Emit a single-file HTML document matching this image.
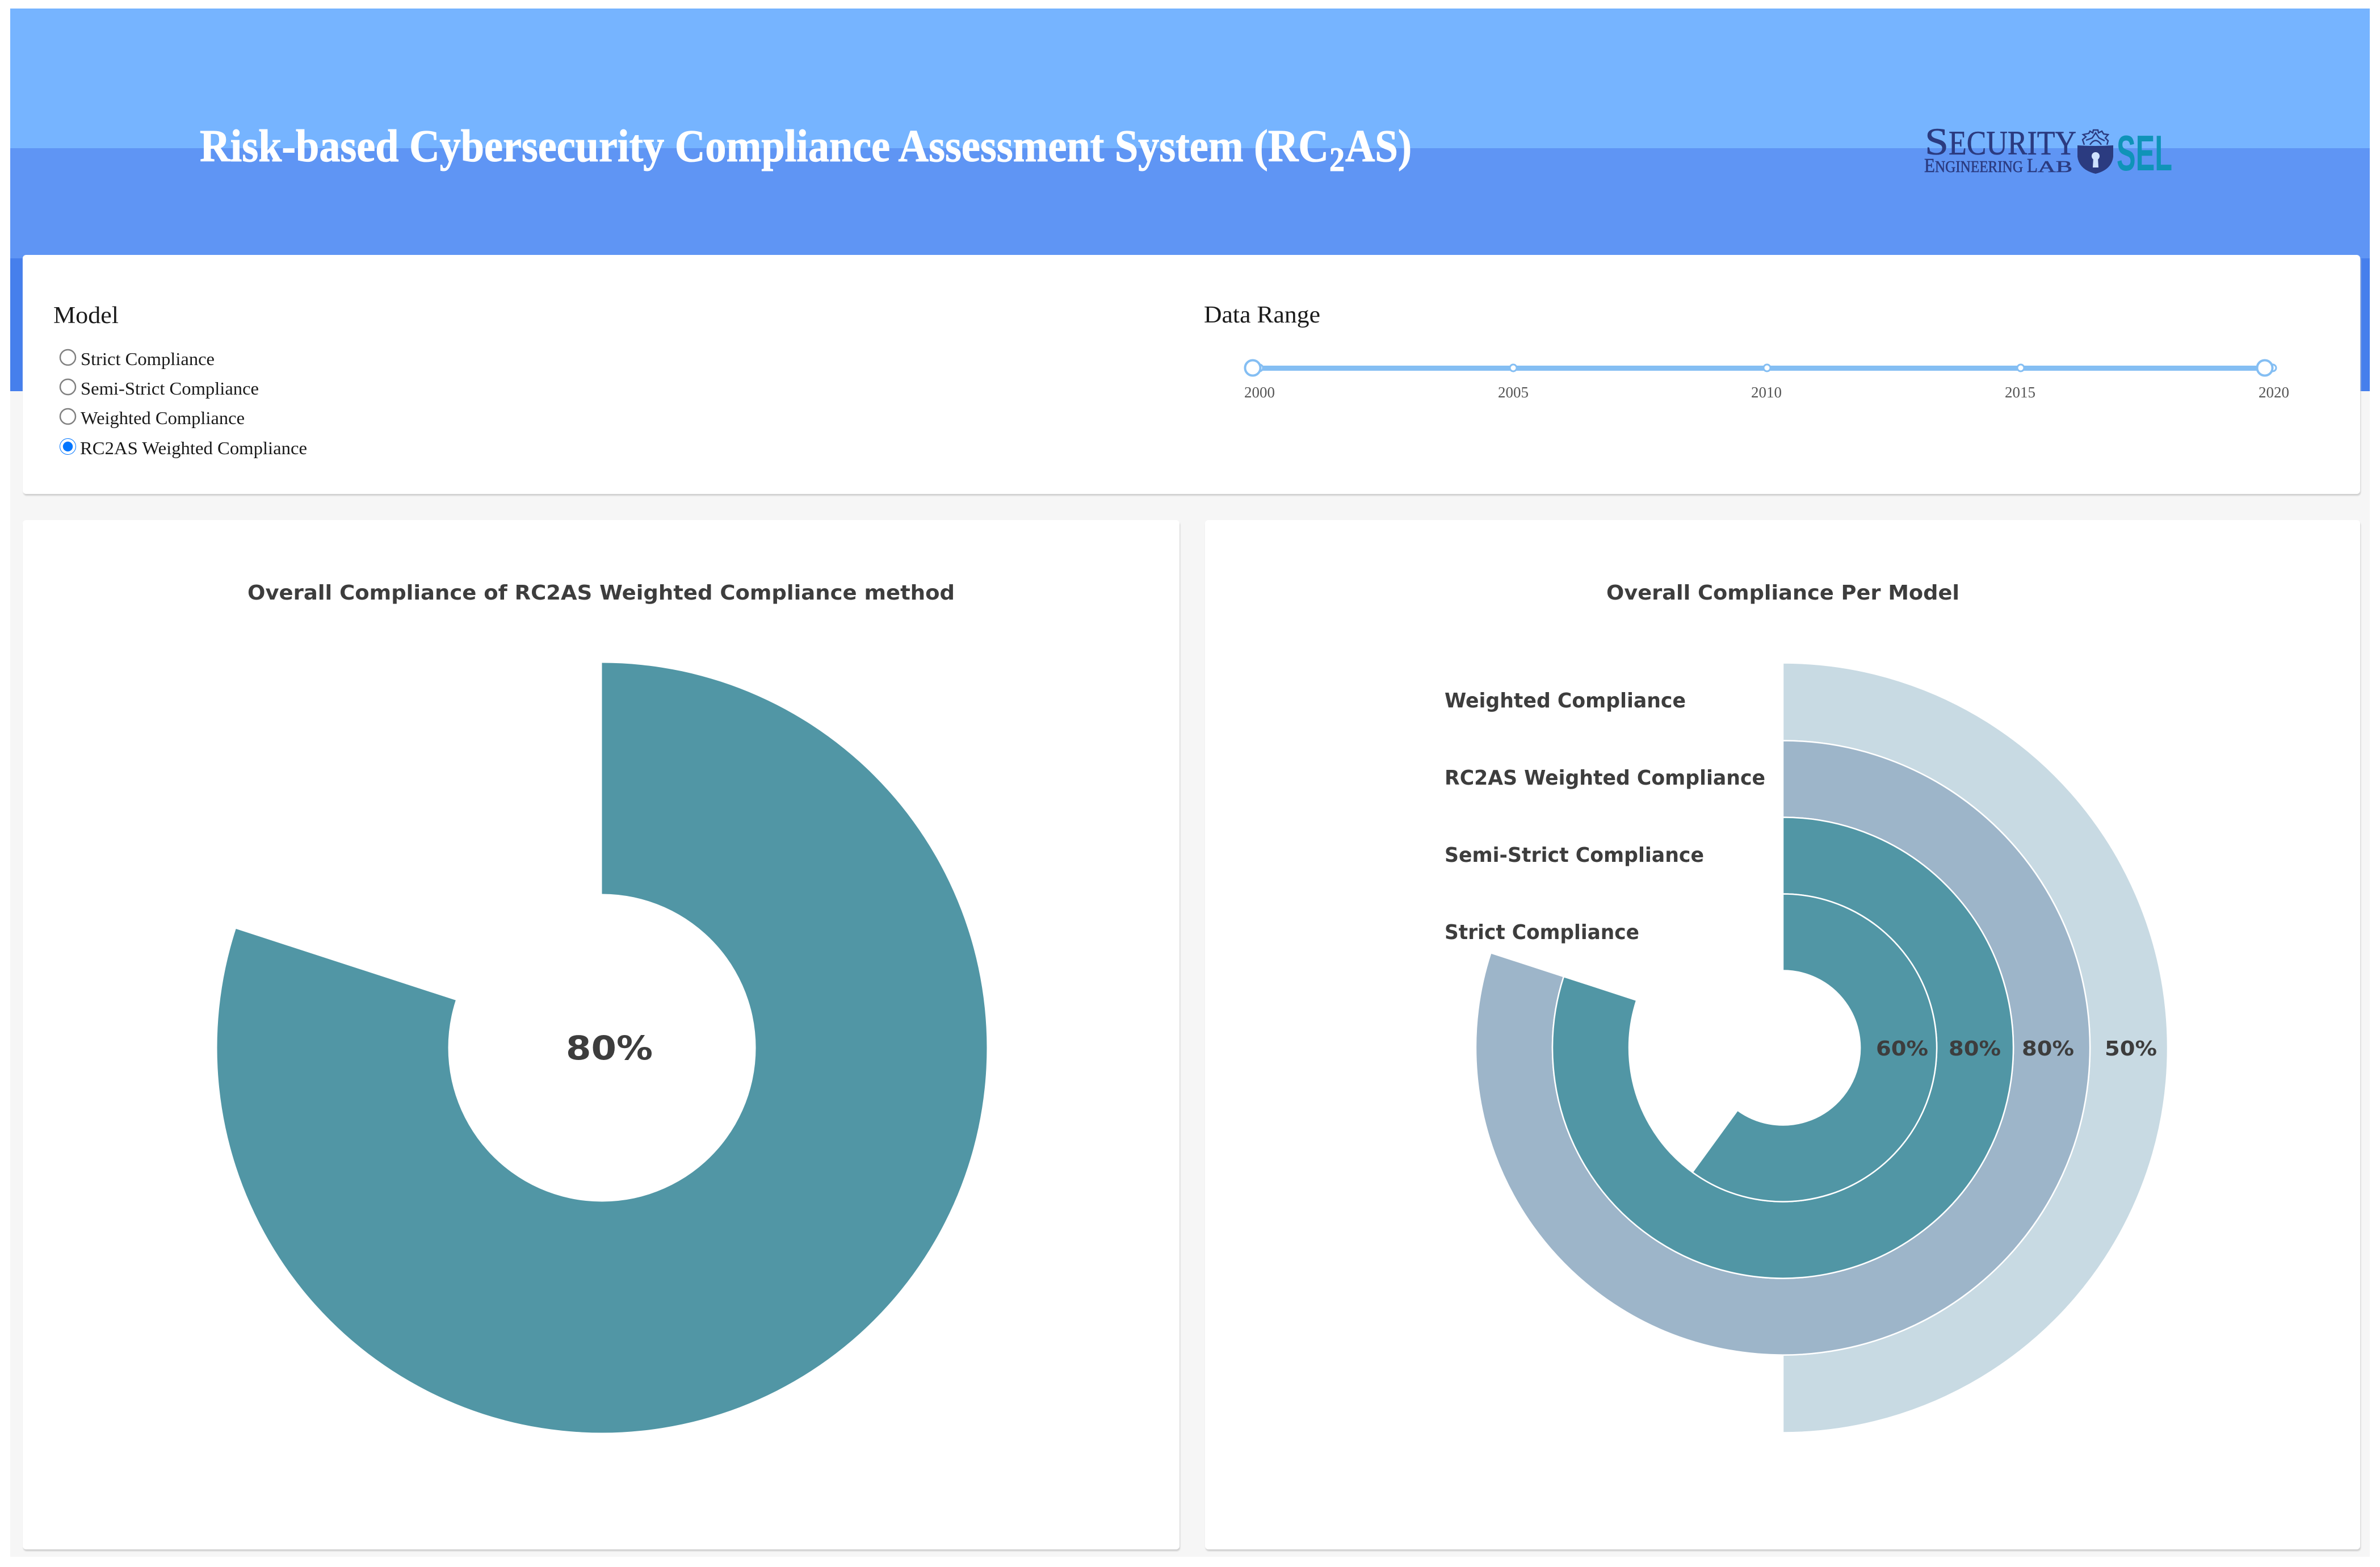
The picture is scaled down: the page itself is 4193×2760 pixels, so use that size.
<!DOCTYPE html>
<html lang="en">
<head>
<meta charset="utf-8">
<title>Risk-based Cybersecurity Compliance Assessment System (RC2AS)</title>
<style>
html,body{margin:0;padding:0;background:#fff;width:4193px;height:2760px;overflow:hidden}
.abs{position:absolute}
.card{position:absolute;background:#fff;border-radius:6px;box-shadow:1px 3px 2px #cfcfcf}
svg{position:absolute;left:0;top:0}
input{position:absolute;margin:0;width:29px;height:29px;left:105px}
.serif{font-family:"Liberation Serif",serif}
.sans{font-family:"DejaVu Sans",sans-serif;font-weight:bold;fill:#3d3d3d}
</style>
</head>
<body>
<div class="abs" style="left:18px;top:15px;width:4157px;height:2727px;background:#f6f6f6"></div>
<div class="abs" style="left:18px;top:455px;width:4157px;height:234px;background:#467fec"></div>
<div class="abs" style="left:18px;top:261px;width:4157px;height:194px;background:#5f95f4"></div>
<div class="abs" style="left:18px;top:15px;width:4157px;height:246px;background:#76b4ff"></div>

<div class="card" style="left:40px;top:449px;width:4118px;height:421px"></div>
<div class="card" style="left:40px;top:916px;width:2038px;height:1813px"></div>
<div class="card" style="left:2123px;top:916px;width:2035px;height:1813px"></div>

<input type="radio" name="m" style="top:615px">
<input type="radio" name="m" style="top:667px">
<input type="radio" name="m" style="top:719px">
<input type="radio" name="m" style="top:772px" checked>

<svg width="4193" height="2760" viewBox="0 0 4193 2760" xmlns="http://www.w3.org/2000/svg">
  <!-- Radio outlines -->
  <g fill="none" stroke="#808080" stroke-width="2.5">
    <circle cx="119.5" cy="629.5" r="13.5"/>
    <circle cx="119.5" cy="681.5" r="13.5"/>
    <circle cx="119.5" cy="733.5" r="13.5"/>
  </g>

  <!-- Header title -->
  <g class="serif" fill="#fff" font-weight="bold" stroke="#fff" stroke-width="1">
    <text x="352" y="284" font-size="80" textLength="1989" lengthAdjust="spacingAndGlyphs">Risk-based Cybersecurity Compliance Assessment System (RC</text>
    <text x="2342" y="301" font-size="60" textLength="27" lengthAdjust="spacingAndGlyphs">2</text>
    <text x="2370" y="284" font-size="80" textLength="117" lengthAdjust="spacingAndGlyphs">AS)</text>
  </g>

  <!-- Logo -->
  <g class="serif" fill="#2b3b80" stroke="#2b3b80" stroke-width="0.6">
    <text x="3391" y="272" font-size="68" textLength="42" lengthAdjust="spacingAndGlyphs">S</text>
    <text x="3433" y="272" font-size="60" textLength="225" lengthAdjust="spacingAndGlyphs">ECURITY</text>
    <text x="3390" y="303" font-size="35" textLength="19" lengthAdjust="spacingAndGlyphs">E</text>
    <text x="3409" y="303" font-size="28" textLength="155" lengthAdjust="spacingAndGlyphs">NGINEERING</text>
    <text x="3571" y="303" font-size="35" textLength="19" lengthAdjust="spacingAndGlyphs">L</text>
    <text x="3590" y="303" font-size="28" textLength="61" lengthAdjust="spacingAndGlyphs">AB</text>
  </g>
  <path d="M3672,255 L3669,246 L3675,241 L3670,237 L3680,235 L3682,231 L3687,234 L3688,229 L3696,229 L3697,234 L3703,231 L3706,236 L3714,237 L3709,243 L3714,248 L3712,255 M3675,247 L3686,243 L3692,234 L3698,243 L3708,248 M3682,255 Q3692,240 3702,255" fill="none" stroke="#2b3b80" stroke-width="2.4"/>
  <path d="M3660,256 Q3692,258 3723,256 L3723,276 Q3720,299 3692,306 Q3663,299 3660,276 Z" fill="#2b3b80"/>
  <circle cx="3692" cy="275" r="7" fill="#cfe2ff"/>
  <path d="M3688,278 L3696,278 L3697,295 L3687,295 Z" fill="#cfe2ff"/>
  <text x="3729" y="300" font-family="Liberation Sans,sans-serif" font-weight="bold" font-size="88" fill="#0f93b8" textLength="98" lengthAdjust="spacingAndGlyphs">SEL</text>

  <!-- Model -->
  <g class="serif" fill="#1a1a1a">
    <text x="94" y="569" font-size="42" textLength="115" lengthAdjust="spacingAndGlyphs">Model</text>
    <text x="2121" y="568" font-size="42" textLength="205" lengthAdjust="spacingAndGlyphs">Data Range</text>
    <text x="142" y="643" font-size="32" textLength="236" lengthAdjust="spacingAndGlyphs">Strict Compliance</text>
    <text x="142" y="695" font-size="32" textLength="314" lengthAdjust="spacingAndGlyphs">Semi-Strict Compliance</text>
    <text x="142" y="747" font-size="32" textLength="289" lengthAdjust="spacingAndGlyphs">Weighted Compliance</text>
    <text x="141" y="800" font-size="32" textLength="400" lengthAdjust="spacingAndGlyphs">RC2AS Weighted Compliance</text>
  </g>

  <!-- Slider -->
  <rect x="2219" y="644" width="1787" height="9" fill="#84bef3"/>
  <g fill="#fff" stroke="#84bef3" stroke-width="3">
    <circle cx="2219" cy="648" r="6"/>
    <circle cx="2666" cy="648" r="6"/>
    <circle cx="3113" cy="648" r="6"/>
    <circle cx="3560" cy="648" r="6"/>
    <circle cx="4004" cy="648" r="6"/>
    <circle cx="2207" cy="648" r="13.5" stroke-width="4"/>
    <circle cx="3990" cy="648" r="13.5" stroke-width="4"/>
  </g>
  <g class="serif" fill="#555" font-size="27" text-anchor="middle">
    <text x="2219" y="700">2000</text>
    <text x="2666" y="700">2005</text>
    <text x="3112" y="700">2010</text>
    <text x="3559" y="700">2015</text>
    <text x="4006" y="700">2020</text>
  </g>

  <!-- Left chart -->
  <text class="sans" x="436" y="1056" font-size="36" textLength="1246" lengthAdjust="spacingAndGlyphs">Overall Compliance of RC2AS Weighted Compliance method</text>
  <path transform="translate(1.5,1.5)" d="M1059,1166 A678,678 0 1 1 414.2,1634.5 L801.3,1760.3 A271,271 0 1 0 1059,1573 Z" fill="#5196a5"/>
  <text class="sans" x="997" y="1866" font-size="58" textLength="153" lengthAdjust="spacingAndGlyphs">80%</text>

  <!-- Right chart -->
  <text class="sans" x="2830" y="1056" font-size="36" textLength="622" lengthAdjust="spacingAndGlyphs">Overall Compliance Per Model</text>
  <g stroke="#fff" stroke-width="2.5" transform="translate(-2,1.5)">
    <path d="M3143,1166 A678,678 0 0 1 3143,2522 L3143,2385 A541,541 0 0 0 3143,1303 Z" fill="#c8dae3"/>
    <path d="M3143,1303 A541,541 0 1 1 2628.5,1676.8 L2756.9,1718.5 A406,406 0 1 0 3143,1438 Z" fill="#9db5c9"/>
    <path d="M3143,1438 A406,406 0 1 1 2756.9,1718.5 L2885.3,1760.3 A271,271 0 1 0 3143,1573 Z" fill="#5196a5"/>
    <path d="M3143,1573 A271,271 0 1 1 2983.7,2063.2 L3063.1,1954 A136,136 0 1 0 3143,1708 Z" fill="#5196a5"/>
  </g>
  <g class="sans" font-size="36">
    <text x="2545" y="1246" textLength="425" lengthAdjust="spacingAndGlyphs">Weighted Compliance</text>
    <text x="2545" y="1382" textLength="565" lengthAdjust="spacingAndGlyphs">RC2AS Weighted Compliance</text>
    <text x="2545" y="1518" textLength="457" lengthAdjust="spacingAndGlyphs">Semi-Strict Compliance</text>
    <text x="2545" y="1654" textLength="343" lengthAdjust="spacingAndGlyphs">Strict Compliance</text>
    <text x="3305" y="1859" textLength="92" lengthAdjust="spacingAndGlyphs">60%</text>
    <text x="3433" y="1859" textLength="92" lengthAdjust="spacingAndGlyphs">80%</text>
    <text x="3562" y="1859" textLength="92" lengthAdjust="spacingAndGlyphs">80%</text>
    <text x="3708" y="1859" textLength="92" lengthAdjust="spacingAndGlyphs">50%</text>
  </g>
</svg>
</body>
</html>
